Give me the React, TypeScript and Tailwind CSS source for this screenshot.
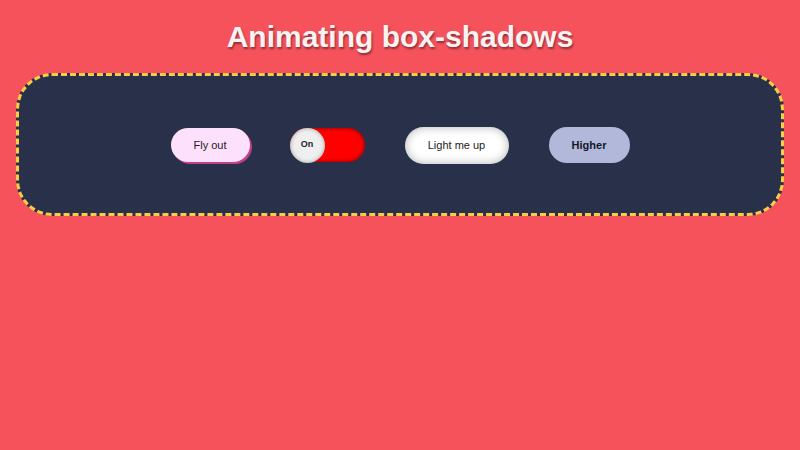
import React from "react";

export default function App() {
  return (
    <div
      className="min-h-[450px] w-full bg-[#f5525b] px-4 pt-[17px]"
      style={{ fontFamily: '"Liberation Sans", Arial, sans-serif' }}
    >
      <h1 className="text-center text-[30px] font-bold leading-[40px] text-[#f7f3f3] [text-shadow:1px_2px_2px_rgba(60,20,30,0.55)]">
        Animating box-shadows
      </h1>
      <div className="mt-[16px] flex h-[143px] items-center justify-center gap-[40px] rounded-[36px] border-[3px] border-dashed border-[#fbcb45] bg-[#283149] pt-[1px]">
        <button className="h-[34px] w-[79px] rounded-full bg-[#fde0fb] text-[11px] text-[#1c1c24] shadow-[2px_2px_0_#c0408a]">
          Fly out
        </button>
        <div className="flex h-[34px] w-[75px] items-center rounded-full bg-[#ff0000] shadow-[inset_0_0_4px_rgba(60,0,0,0.7)]">
          <div className="flex h-[35px] w-[35px] items-center justify-center rounded-full bg-[#efefef] text-[9px] font-bold text-[#222] shadow-[inset_0_0_4px_rgba(0,0,0,0.35)]">
            On
          </div>
        </div>
        <button className="h-[37px] w-[104px] rounded-full bg-white text-[11px] text-[#1c1c24] shadow-[inset_0_0_10px_rgba(0,0,0,0.3)]">
          Light me up
        </button>
        <button className="h-[36px] w-[81px] rounded-full bg-[#b2b8da] text-[11px] font-bold text-[#141828]">
          Higher
        </button>
      </div>
    </div>
  );
}
